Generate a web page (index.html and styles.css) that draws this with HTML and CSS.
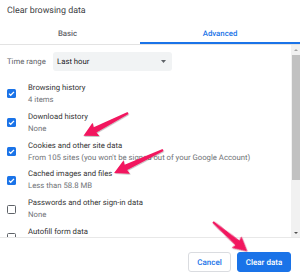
FILE: index.html
```html
<!DOCTYPE html>
<html>
<head>
<meta charset="utf-8">
<link rel="stylesheet" href="styles.css">
</head>
<body>
<div class="dialog">
  <div class="title">Clear browsing data</div>
  <div class="tabs">
    <div class="tab tab-basic">Basic</div>
    <div class="tab tab-advanced active">Advanced</div>
  </div>
  <div class="body">
    <div class="scroll-area">
      <div class="range-row">
        <span class="range-label">Time range</span>
        <div class="select">
          <span>Last hour</span>
          <svg class="caret" width="5" height="3" viewBox="0 0 5 3"><path d="M0 0H5L2.5 3Z" fill="#5f6368"/></svg>
        </div>
      </div>
      <div class="list">
        <div class="item">
          <span class="cb checked"><svg width="9" height="9" viewBox="0 0 9 9"><path d="M2 4.6L3.7 6.3L7 2.9" fill="none" stroke="#fff" stroke-width="1.3"/></svg></span>
          <div class="item-text"><div class="item-title">Browsing history</div><div class="item-sub">4 items</div></div>
        </div>
        <div class="item">
          <span class="cb checked"><svg width="9" height="9" viewBox="0 0 9 9"><path d="M2 4.6L3.7 6.3L7 2.9" fill="none" stroke="#fff" stroke-width="1.3"/></svg></span>
          <div class="item-text"><div class="item-title">Download history</div><div class="item-sub">None</div></div>
        </div>
        <div class="item">
          <span class="cb checked"><svg width="9" height="9" viewBox="0 0 9 9"><path d="M2 4.6L3.7 6.3L7 2.9" fill="none" stroke="#fff" stroke-width="1.3"/></svg></span>
          <div class="item-text"><div class="item-title">Cookies and other site data</div><div class="item-sub">From 105 sites (you won't be signed out of your Google Account)</div></div>
        </div>
        <div class="item">
          <span class="cb checked"><svg width="9" height="9" viewBox="0 0 9 9"><path d="M2 4.6L3.7 6.3L7 2.9" fill="none" stroke="#fff" stroke-width="1.3"/></svg></span>
          <div class="item-text"><div class="item-title">Cached images and files</div><div class="item-sub">Less than 58.8 MB</div></div>
        </div>
        <div class="item">
          <span class="cb"></span>
          <div class="item-text"><div class="item-title">Passwords and other sign-in data</div><div class="item-sub">None</div></div>
        </div>
        <div class="item">
          <span class="cb"></span>
          <div class="item-text"><div class="item-title">Autofill form data</div><div class="item-sub">None</div></div>
        </div>
      </div>
    </div>
    <div class="scrollbar">
      <span class="sb-up"></span>
      <span class="sb-thumb"></span>
      <span class="sb-down"></span>
    </div>
  </div>
  <div class="footer">
    <button class="btn btn-cancel">Cancel</button>
    <button class="btn btn-primary">Clear data</button>
  </div>
  <svg class="arrows" width="300" height="280" viewBox="0 0 300 280">
    <defs>
      <filter id="sh" x="-20%" y="-20%" width="140%" height="140%">
        <feDropShadow dx="0.6" dy="0.8" stdDeviation="0.7" flood-color="#000" flood-opacity="0.3"/>
      </filter>
    </defs>
    <g fill="#f2155e" filter="url(#sh)">
      <polygon transform="translate(128 113) rotate(152.9)" points="0,-1 37,-3 36,-7.5 50,0 36,7.5 37,3 0,1"/>
      <polygon transform="translate(163 150) rotate(154.9)" points="0,-1 41,-3 40,-7.5 54,0 40,7.5 41,3 0,1"/>
      <polygon transform="translate(213 222) rotate(40.5)" points="0,-1 32,-3 31,-7.5 45,0 31,7.5 32,3 0,1"/>
    </g>
  </svg>
</div>
</body>
</html>
```

FILE: styles.css
```css
html, body {
  margin: 0;
  padding: 0;
  background: #fff;
}

body {
  font-family: Roboto, "Liberation Sans", sans-serif;
  text-rendering: geometricPrecision;
}

.dialog {
  position: relative;
  width: 300px;
  height: 280px;
  overflow: hidden;
  background: #fff;
}

.title {
  height: 22px;
  line-height: 22px;
  padding-left: 7px;
  font-size: 8.9px;
  color: #3c4043;
}

.tabs {
  display: flex;
  height: 22px;
  border-bottom: 1px solid #e3e3e3;
}

.tab {
  display: flex;
  align-items: center;
  justify-content: center;
  font-size: 7.8px;
  font-weight: 500;
  color: #5f6368;
}

.tab-basic {
  width: 140px;
  padding-right: 5px;
  box-sizing: border-box;
}

.tab-advanced {
  flex: 1;
}

.tab.active {
  color: #1a73e8;
  box-shadow: inset 0 -2px 0 #1a73e8;
}

.body {
  display: flex;
  height: 192px;
  border-bottom: 1px solid #e8e8e8;
}

.scroll-area {
  flex: 1;
  overflow: hidden;
}

.range-row {
  display: flex;
  align-items: center;
  height: 19px;
  margin-top: 7px;
  padding-left: 7px;
}

.range-label {
  width: 46px;
  font-size: 7.75px;
  color: #5f6368;
}

.select {
  display: flex;
  align-items: center;
  justify-content: space-between;
  width: 119px;
  height: 19px;
  box-sizing: border-box;
  padding: 0 6px 0 4px;
  background: #f1f3f4;
  border-radius: 3px;
  font-size: 7.75px;
  color: #202124;
}

.caret {
  display: block;
}

.list {
  margin-top: 8.6px;
}

.item {
  display: flex;
  align-items: center;
  height: 28.8px;
  padding-left: 7px;
}

.cb {
  flex: none;
  width: 9px;
  height: 9px;
  margin-right: 12px;
  box-sizing: border-box;
  border-radius: 1.5px;
  border: 1.3px solid #5f6368;
}

.cb svg {
  display: block;
}

.cb.checked {
  border: none;
  background: #1a73e8;
}

.item-title {
  font-size: 7.75px;
  line-height: 12px;
  color: #333;
  white-space: nowrap;
}

.item-sub {
  font-size: 7.75px;
  line-height: 12px;
  color: #6f7276;
  white-space: nowrap;
}

.scrollbar {
  flex: none;
  width: 9px;
  display: flex;
  flex-direction: column;
  align-items: center;
  background: #f1f1f1;
}

.sb-up {
  width: 0;
  height: 0;
  margin-top: 4px;
  border-left: 2.5px solid transparent;
  border-right: 2.5px solid transparent;
  border-bottom: 2.5px solid #a3a3a3;
}

.sb-thumb {
  width: 8px;
  height: 125px;
  margin-top: 3.5px;
  background: #c1c1c1;
}

.sb-down {
  width: 0;
  height: 0;
  margin-top: auto;
  margin-bottom: 3.5px;
  border-left: 2.5px solid transparent;
  border-right: 2.5px solid transparent;
  border-top: 2.5px solid #505050;
}

.footer {
  display: flex;
  justify-content: flex-end;
  gap: 6px;
  padding: 14px 9px 0 0;
}

.btn {
  height: 20px;
  padding: 0;
  border-radius: 3px;
  font-family: Roboto, "Liberation Sans", sans-serif;
  font-size: 8px;
  font-weight: 500;
  text-rendering: geometricPrecision;
  cursor: pointer;
}

.btn-cancel {
  width: 43px;
  background: #fff;
  border: 1px solid #dadce0;
  color: #1a73e8;
}

.btn-primary {
  width: 54px;
  background: #1a73e8;
  border: 1px solid #1a73e8;
  color: #fff;
}

.arrows {
  position: absolute;
  left: 0;
  top: 0;
  pointer-events: none;
}
```
